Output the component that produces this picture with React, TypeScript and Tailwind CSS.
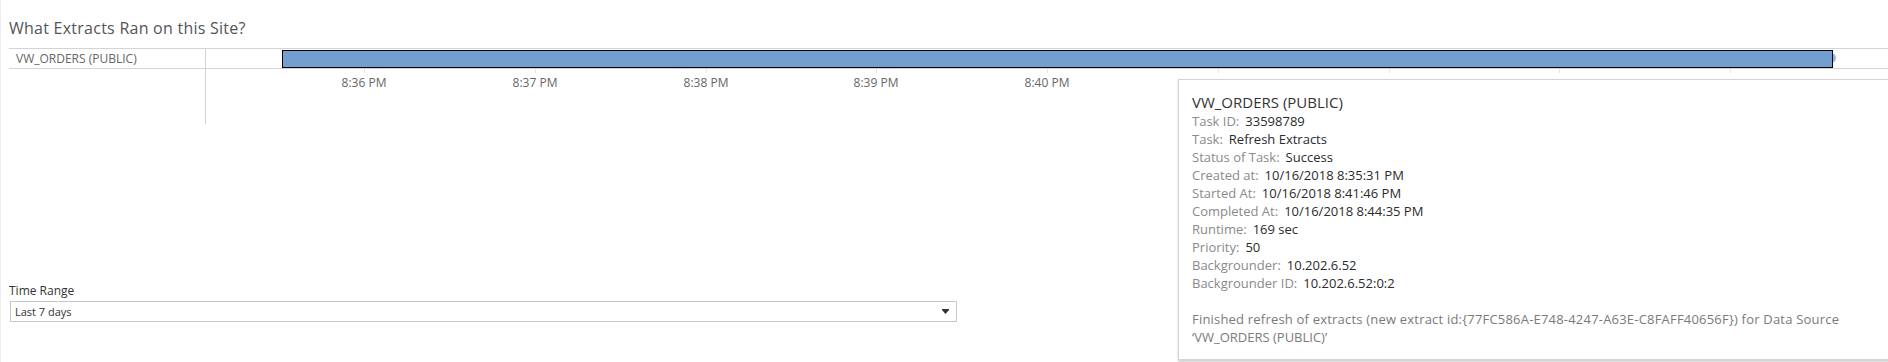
import React from 'react';

// axis ticks every minute; labels past 8:40 sit under the tooltip
const ticks = ['8:36 PM', '8:37 PM', '8:38 PM', '8:39 PM', '8:40 PM', '8:41 PM', '8:42 PM', '8:43 PM', '8:44 PM'];
const visibleLabels = 5;

const details: [string, string][] = [
  ['Task ID', '33598789'],
  ['Task', 'Refresh Extracts'],
  ['Status of Task', 'Success'],
  ['Created at', '10/16/2018 8:35:31 PM'],
  ['Started At', '10/16/2018 8:41:46 PM'],
  ['Completed At', '10/16/2018 8:44:35 PM'],
  ['Runtime', '169 sec'],
  ['Priority', '50'],
  ['Backgrounder', '10.202.6.52'],
  ['Backgrounder ID', '10.202.6.52:0:2'],
];

function Tooltip() {
  return (
    <div className="absolute left-[1177px] top-[79px] w-[760px] h-[281px] bg-white border border-[#d3d3d3] shadow-[0_2px_2px_rgba(0,0,0,0.18)] pl-[13px] pt-[13px]">
      <div className="text-[15px] leading-[19px] text-[#333]">VW_ORDERS (PUBLIC)</div>
      <div className="text-[13px] leading-[18px]">
        {details.map(([label, value]) => (
          <div key={label} className="flex">
            <span className="text-[#8a8a8a]">{label}:</span>
            <span className="ml-[6px] text-[#2b2b2b]">{value}</span>
          </div>
        ))}
        <div className="h-[18px]" />
        <div className="text-[#7a7a7a] tracking-[0.2px]">
          Finished refresh of extracts (new extract id:{'{'}77FC586A-E748-4247-A63E-C8FAFF40656F{'}'}) for Data Source
        </div>
        <div className="text-[#7a7a7a]">&#8216;VW_ORDERS (PUBLIC)&#8217;</div>
      </div>
    </div>
  );
}

function Gantt() {
  return (
    <div className="mt-[10px] ml-[8px]">
      {/* row */}
      <div className="flex h-[21px] border-y border-[#d4d4d4]">
        <div className="w-[197px] border-r border-[#d4d4d4] pl-[7px] flex items-center text-[12px] leading-[16px] text-[#666]">
          VW_ORDERS (PUBLIC)
        </div>
        <div className="relative flex-1">
          <div className="absolute left-[1620px] top-[4px] w-[10px] h-[10px] rounded-full bg-[#8db6e0]" />
          <div className="absolute left-[76px] top-[1px] w-[1551px] h-[18px] bg-[#729fcf] border border-black" />
        </div>
      </div>
      {/* axis */}
      <div className="flex h-[55px]">
        <div className="w-[197px] border-r border-[#d4d4d4]" />
        <div className="relative flex-1">
          {ticks.map((t, i) => {
            const x = 158 + i * 170.75;
            return (
              <div key={t}>
                <div className="absolute top-0 w-px h-[4px] bg-[#e3e3e3]" style={{ left: Math.round(x) }} />
                {i < visibleLabels && (
                  <div
                    className="absolute top-[6px] w-[80px] text-center text-[12px] leading-[16px] text-[#666]"
                    style={{ left: Math.round(x) - 40 }}
                  >
                    {t}
                  </div>
                )}
              </div>
            );
          })}
        </div>
      </div>
    </div>
  );
}

function TimeRangeFilter() {
  return (
    <div className="mt-[159px] pl-[8px]">
      <div className="text-[12px] leading-[16px] text-[#333]">Time Range</div>
      <div className="mt-[2px] ml-[1px] w-[947px] h-[21px] border border-[#c8c8c8] flex items-center justify-between pl-[4px] pr-[7px]">
        <span className="text-[11px] leading-[14px] text-[#333]">Last 7 days</span>
        <svg width="7" height="5" viewBox="0 0 7 5">
          <rect x="0" y="0" width="7" height="1" fill="#333" />
          <path d="M0 1 L7 1 L3.5 5 Z" fill="#333" />
        </svg>
      </div>
    </div>
  );
}

export default function App() {
  return (
    <div className="relative w-[1888px] h-[362px] overflow-hidden bg-white border-l border-[#ececec] font-['Open_Sans',sans-serif]">
      <h1 className="pl-[8px] pt-[18px] text-[16px] leading-[20px] tracking-[0.25px] text-[#555]">
        What Extracts Ran on this Site?
      </h1>
      <Gantt />
      <TimeRangeFilter />
      <Tooltip />
    </div>
  );
}
